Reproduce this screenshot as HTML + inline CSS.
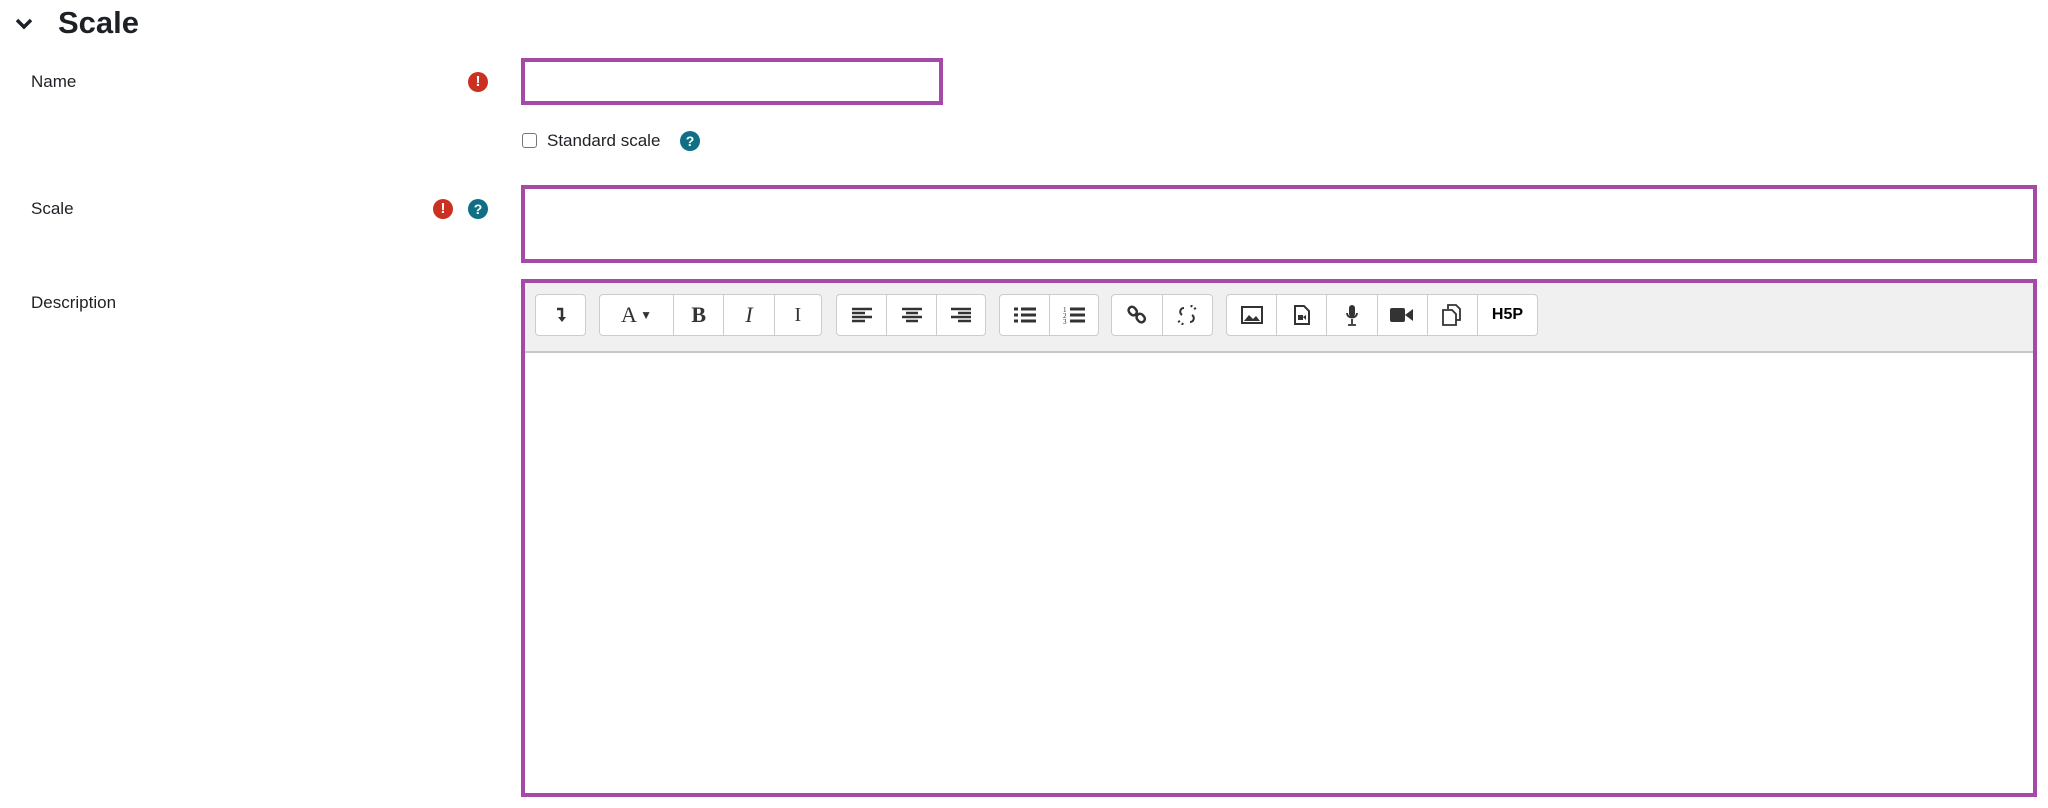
<!DOCTYPE html>
<html><head><meta charset="utf-8"><style>
body{margin:0;width:2048px;height:808px;background:#fff;font-family:"Liberation Sans",sans-serif;color:#1d2125;position:relative;overflow:hidden}
.a{position:absolute}
.lbl{font-size:17px;line-height:20px}
.box{position:absolute;border:4px solid #a54aa8;box-sizing:border-box;background:#fff}
.req{width:20px;height:20px;border-radius:50%;background:#ca3120;color:#fff;font-weight:bold;font-size:15px;text-align:center;line-height:20px}
.hlp{width:20px;height:20px;border-radius:50%;background:#0f6f85;color:#fff;font-weight:bold;font-size:14px;text-align:center;line-height:20px}
.grp{position:absolute;top:294px;height:42px;border:1px solid #ccc;border-radius:4px;background:#fff;box-sizing:border-box;display:flex}
.grp div{height:40px;border-right:1px solid #ccc;display:flex;align-items:center;justify-content:center;color:#333;font-family:"Liberation Serif",serif;font-size:22px}
.grp div:last-child{border-right:none}
</style></head><body>
<svg class="a" style="left:14px;top:16px" width="20" height="16" viewBox="0 0 20 16"><path d="M3 4 L10 11 L17 4" stroke="#1d2125" stroke-width="3.5" fill="none"/></svg>
<div class="a" style="left:58px;top:5px;font-size:31px;font-weight:bold">Scale</div>

<div class="a lbl" style="left:31px;top:72px">Name</div>
<div class="a req" style="left:468px;top:72px">!</div>
<div class="box" style="left:521px;top:58px;width:422px;height:47px"></div>

<div class="a" style="left:522px;top:133px;width:15px;height:15px;border:1px solid #777;border-radius:3px;box-sizing:border-box"></div>
<div class="a lbl" style="left:547px;top:131px">Standard scale</div>
<div class="a hlp" style="left:680px;top:131px">?</div>

<div class="a lbl" style="left:31px;top:199px">Scale</div>
<div class="a req" style="left:433px;top:199px">!</div>
<div class="a hlp" style="left:468px;top:199px">?</div>
<div class="box" style="left:521px;top:185px;width:1516px;height:78px"></div>

<div class="a lbl" style="left:31px;top:293px">Description</div>
<div class="box" style="left:521px;top:279px;width:1516px;height:518px"></div>
<div class="a" style="left:525px;top:283px;width:1508px;height:68px;background:#f0f0f0;border-bottom:2px solid #c8c8c8"></div>

<div class="grp" style="left:535px;width:51px"><div style="width:49px"><svg width="12" height="16" viewBox="0 0 12 16"><path d="M2 2H7V11" stroke="#333" stroke-width="2.5" fill="none"/><path d="M3 10L7 15L11 10Z" fill="#333"/></svg></div></div>
<div class="grp" style="left:599px;width:223px"><div style="width:74px">A<span style="font-size:12px;font-family:'Liberation Sans'">&nbsp;▼</span></div><div style="width:50px;font-weight:bold">B</div><div style="width:50px;font-style:italic">I</div><div style="width:47px;font-size:20px">I</div></div>
<div class="grp" style="left:836px;width:150px">
<div style="width:50px"><svg width="20" height="16"><path d="M0 2h20M0 6h13M0 10h20M0 14h13" stroke="#333" stroke-width="2.5"/></svg></div>
<div style="width:49px"><svg width="20" height="16"><path d="M0 2h20M4 6h12M0 10h20M4 14h12" stroke="#333" stroke-width="2.5"/></svg></div>
<div style="width:49px"><svg width="20" height="16"><path d="M0 2h20M7 6h13M0 10h20M7 14h13" stroke="#333" stroke-width="2.5"/></svg></div></div>
<div class="grp" style="left:999px;width:100px">
<div style="width:50px"><svg width="22" height="16"><path d="M0 2h4M0 8h4M0 14h4M7 2h15M7 8h15M7 14h15" stroke="#333" stroke-width="3"/></svg></div>
<div style="width:48px"><svg width="22" height="18"><text x="0" y="6" font-size="7" fill="#333">1</text><text x="0" y="12" font-size="7" fill="#333">2</text><text x="0" y="18" font-size="7" fill="#333">3</text><path d="M7 3h15M7 9h15M7 15h15" stroke="#333" stroke-width="3"/></svg></div></div>
<div class="grp" style="left:1111px;width:102px">
<div style="width:50px"><svg width="20" height="20"><rect x="2" y="2" width="7" height="9" rx="3.5" transform="rotate(-40 5 6)" stroke="#333" stroke-width="2.5" fill="none"/><rect x="10" y="9" width="7" height="9" rx="3.5" transform="rotate(-40 13 13)" stroke="#333" stroke-width="2.5" fill="none"/></svg></div>
<div style="width:50px"><svg width="20" height="20"><path d="M7 3c-4 0-5 5-2 7M13 17c4 0 5-5 2-7M14 2l1-2M17 4l2-1M3 16l-2 1M6 18l-1 2" stroke="#333" stroke-width="2" fill="none"/></svg></div></div>
<div class="grp" style="left:1226px;width:312px">
<div style="width:50px"><svg width="22" height="18"><rect x="1" y="1" width="20" height="16" stroke="#333" stroke-width="2" fill="none"/><path d="M3 15l5-6 4 4 3-3 4 5z" fill="#333"/></svg></div>
<div style="width:50px"><svg width="16" height="20"><path d="M1 1h9l5 5v13H1z" stroke="#333" stroke-width="2" fill="none"/><path d="M4 10h5v5H4zM9 12l3-2v5z" fill="#333"/></svg></div>
<div style="width:50px"><svg width="14" height="22"><rect x="4" y="1" width="6" height="12" rx="3" fill="#333"/><path d="M2 9c0 6 10 6 10 0M7 15v5M3 21h8" stroke="#333" stroke-width="1.8" fill="none"/></svg></div>
<div style="width:50px"><svg width="24" height="16"><rect x="0" y="1" width="15" height="14" rx="2" fill="#333"/><path d="M15 8l8-6v12z" fill="#333"/></svg></div>
<div style="width:50px"><svg width="20" height="22"><path d="M6 5V1h8l4 4v11h-4M1 6h9l4 4v11H1z" stroke="#333" stroke-width="1.8" fill="#fff"/></svg></div>
<div style="width:60px;font-family:'Liberation Sans';font-size:16px;font-weight:bold;color:#000">H5P</div></div>
</body></html>
